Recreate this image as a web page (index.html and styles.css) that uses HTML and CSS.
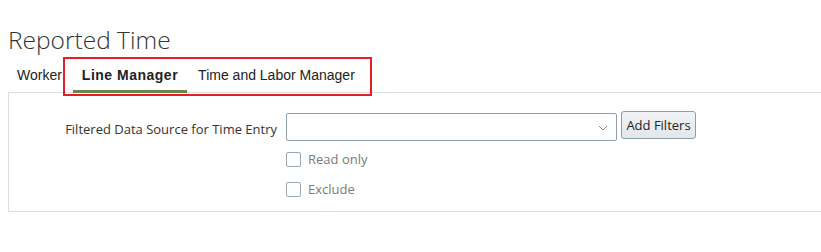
FILE: index.html
```html
<!DOCTYPE html>
<html lang="en">
<head>
<meta charset="utf-8">
<title>Reported Time</title>
<link rel="stylesheet" href="styles.css">
</head>
<body>
<div class="page">
  <h1 class="title">Reported Time</h1>
  <div class="tabs">
    <div class="tab">Worker</div>
    <div class="tab active">Line Manager</div>
    <div class="tab">Time and Labor Manager</div>
    <div class="highlight"></div>
  </div>
  <div class="panel">
    <div class="form">
      <label class="label">Filtered Data Source for Time Entry</label>
      <div class="field">
        <div class="select">
          <svg class="chev" width="10" height="6" viewBox="0 0 10 6"><path d="M1 1 L5 5 L9 1" fill="none" stroke="#8c8c8c" stroke-width="1"/></svg>
        </div>
        <button class="btn">Add Filters</button>
      </div>
      <div></div>
      <div class="check first"><span class="box"></span><span>Read only</span></div>
      <div></div>
      <div class="check"><span class="box"></span><span>Exclude</span></div>
    </div>
  </div>
</div>
</body>
</html>
```

FILE: styles.css
```css
html, body { margin: 0; padding: 0; background: #fff; }
.page { position: relative; padding: 24px 0 0 8px; width: 840px; }
.title {
  margin: 0;
  font-family: "Open Sans", "Noto Sans", sans-serif;
  font-weight: 300;
  font-size: 24.5px;
  line-height: 32px;
  color: #333;
}
.tabs {
  position: relative;
  display: flex;
  gap: 2px;
  margin-top: 11px;
  margin-bottom: -1px;
}
.tab {
  font-family: "Liberation Sans", Arial, sans-serif;
  font-size: 14px;
  line-height: 17px;
  padding: 0 9px 6px 9px;
  border-bottom: 3px solid transparent;
  color: #222;
}
.tab.active {
  font-weight: bold;
  letter-spacing: 0.5px;
  border-bottom-color: #6b8550;
}
.highlight {
  position: absolute;
  left: 55px;
  top: -10px;
  width: 305px;
  height: 35px;
  border: 2px solid #e81c24;
}
.panel {
  border: 1px solid #d7dfe5;
  border-right: none;
  padding: 18px 0 10px 0;
}
.form {
  display: grid;
  grid-template-columns: 268px auto;
  column-gap: 9px;
  row-gap: 0;
  font-family: "Open Sans", "Noto Sans", sans-serif;
  font-size: 13px;
}
.label {
  text-align: right;
  color: #333;
  padding-top: 9px;
  line-height: 18px;
}
.field { display: flex; align-items: flex-start; gap: 4px; }
.select {
  position: relative;
  margin-top: 2px;
  width: 329px;
  height: 26px;
  border: 1px solid #8fa0ad;
  border-radius: 2px;
  background: #fff;
}
.chev { position: absolute; right: 8px; top: 11px; }
.btn {
  height: 28px;
  width: 75px;
  padding: 0;
  border: 1px solid #8b9cab;
  border-radius: 3px;
  background: linear-gradient(#f1f3f5, #e3e7ea);
  font-family: "Open Sans", "Noto Sans", sans-serif;
  font-size: 13px;
  color: #222;
}
.check {
  display: flex;
  align-items: center;
  gap: 7px;
  color: #7a7a7a;
  height: 24px;
  margin-top: 6px;
}
.box {
  width: 13px;
  height: 13px;
  border: 1px solid #9aa6b0;
  border-radius: 2px;
  background: #fff;
}
```
